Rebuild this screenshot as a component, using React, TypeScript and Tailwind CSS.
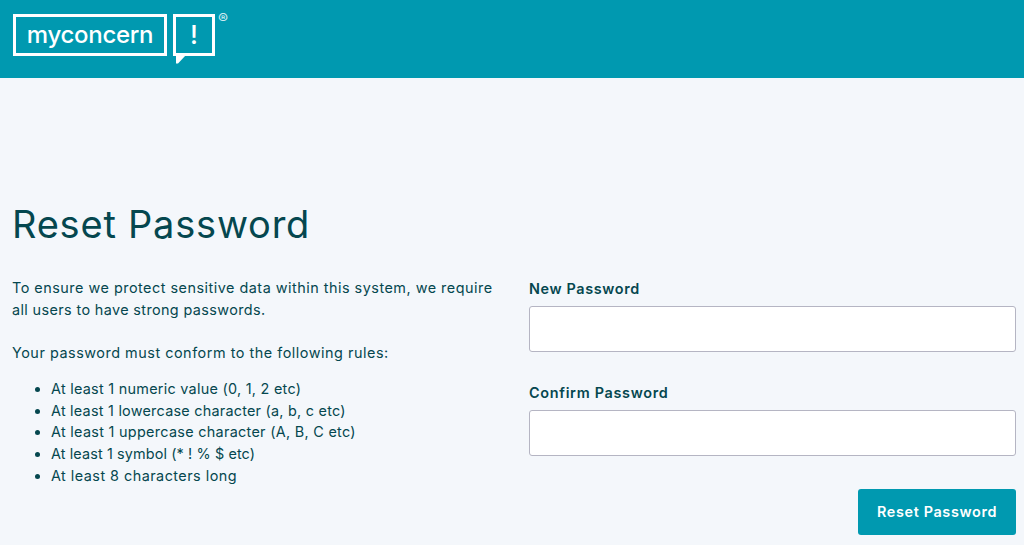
import React from "react";

const rules = [
  { text: "At least 1 numeric value (0, 1, 2 etc)", cls: "tracking-[0.27px]" },
  { text: "At least 1 lowercase character (a, b, c etc)", cls: "tracking-[0.24px]" },
  { text: "At least 1 uppercase character (A, B, C etc)", cls: "tracking-[0.3px]" },
  { text: "At least 1 symbol (* ! % $ etc)", cls: "tracking-[0.12px]" },
  { text: "At least 8 characters long", cls: "tracking-[0.47px]" },
];

function Logo() {
  return (
    <div className="flex items-start gap-[6px]">
      <div className="flex h-[42px] w-[154px] items-center justify-center border-[3px] border-white pb-[1px] text-[24px] font-medium leading-none tracking-[-0.3px] text-white">
        myconcern
      </div>
      <div className="relative flex h-[42px] w-[42px] items-center justify-center border-[3px] border-white text-[26px] font-medium leading-none text-white">
        !
        <svg className="absolute left-[0px] top-[38px]" width="12" height="10" viewBox="0 0 12 10">
          <path d="M0 0H10L2 8.5H0Z" fill="#fff" />
        </svg>
      </div>
      <span className="-ml-[3px] mt-[-3px] text-[15px] leading-[15px] text-[#cdeaf0]">®</span>
    </div>
  );
}

function Field({ label, cls }: { label: string; cls: string }) {
  return (
    <div>
      <label className={`block pt-[1px] text-[14.4px] font-semibold leading-[21px] text-[#05474f] ${cls}`}>{label}</label>
      <input className="mt-[7px] block h-[46px] w-full rounded-[3px] border border-[#b5b5c3] bg-white" type="password" />
    </div>
  );
}

export default function App() {
  return (
    <div className="min-h-[545px] overflow-hidden bg-[#f4f7fb] font-['Inter','Liberation_Sans',sans-serif] text-[#05474f]">
      <header className="h-[78px] bg-[#0099b0] pl-[13px] pt-[14px]">
        <Logo />
      </header>
      <main className="px-[12px] pr-[8px] pt-[122px]">
        <h1 className="text-[38px] font-normal leading-[48px] tracking-[0.78px]">Reset Password</h1>
        <div className="mt-[29px] grid grid-cols-[517px_1fr]">
          <div className="text-[14.4px] leading-[21.6px]">
            <p className="tracking-[0.5px]">
              To ensure we protect sensitive data within this system, we require
            </p>
            <p className="tracking-[0.38px]">all users to have strong passwords.</p>
            <p className="mt-[21.6px] tracking-[0.53px]">Your password must conform to the following rules:</p>
            <ul className="mt-[14.6px] list-disc pl-[39px] leading-[21.7px]">
              {rules.map((r) => (
                <li key={r.text} className={r.cls}>
                  {r.text}
                </li>
              ))}
            </ul>
          </div>
          <div>
            <Field label="New Password" cls="tracking-[0.65px]" />
            <div className="mt-[29px]">
              <Field label="Confirm Password" cls="tracking-[0.7px]" />
            </div>
            <div className="mt-[33px] flex justify-end">
              <button className="h-[46px] w-[158px] rounded-[3px] bg-[#0099b0] text-[14.4px] font-semibold tracking-[0.65px] text-white">
                Reset Password
              </button>
            </div>
          </div>
        </div>
      </main>
    </div>
  );
}
